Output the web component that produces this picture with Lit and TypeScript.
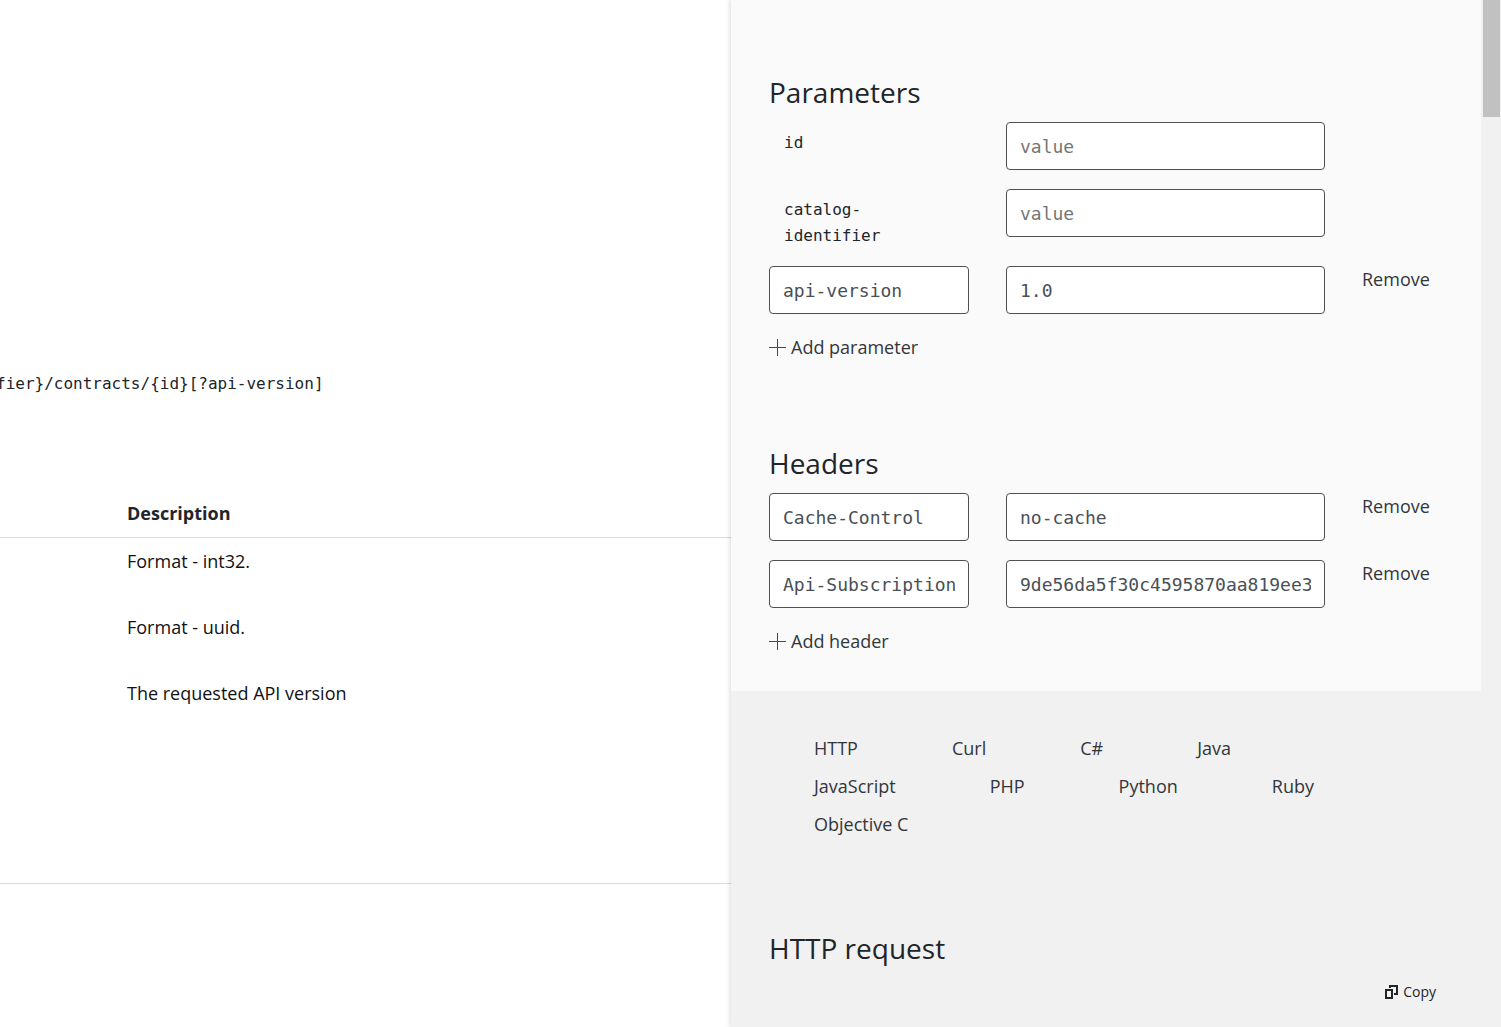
import { LitElement, html, css, nothing } from "lit";
import { customElement, property } from "lit/decorators.js";

interface Field {
  name: string;
  value: string;
  fixed?: boolean;
}

const PARAMETERS: Field[] = [
  { name: "id", value: "", fixed: true },
  { name: "catalog-identifier", value: "", fixed: true },
  { name: "api-version", value: "1.0" },
];

const HEADERS: Field[] = [
  { name: "Cache-Control", value: "no-cache" },
  { name: "Api-Subscription-Key", value: "9de56da5f30c4595870aa819ee3b" },
];

const DESCRIPTIONS = ["Format - int32.", "Format - uuid.", "The requested API version"];

const LANGUAGES = ["HTTP", "Curl", "C#", "Java", "JavaScript", "PHP", "Python", "Ruby", "Objective C"];

@customElement("field-group")
export class FieldGroup extends LitElement {
  @property() heading = "";
  @property() addLabel = "";
  @property({ attribute: false }) fields: Field[] = [];

  static styles = css`
    :host {
      display: block;
    }
    .heading {
      margin: 0 0 12px;
      font-size: 28px;
      font-weight: 400;
      line-height: 36px;
      color: #212529;
    }
    .rows {
      display: grid;
      gap: 17px;
      margin-bottom: 18px;
    }
    .row {
      display: grid;
      grid-template-columns: 200fr 319fr 81fr;
      column-gap: 37px;
      align-items: start;
      min-height: 50px;
    }
    .name {
      padding: 8px 15px 0;
      font-family: Consolas, "DejaVu Sans Mono", monospace;
      font-size: 16px;
      line-height: 26px;
      color: #212529;
    }
    .input {
      box-sizing: border-box;
      width: 100%;
      min-width: 0;
      height: 48px;
      padding: 0 13px;
      border: 1px solid #505050;
      border-radius: 4px;
      background: #fff;
      font-family: Consolas, "DejaVu Sans Mono", monospace;
      font-size: 18px;
      color: #495057;
    }
    .input::placeholder {
      color: #757575;
      opacity: 1;
    }
    .action {
      display: flex;
      align-items: center;
      gap: 5px;
      padding: 0;
      border: 0;
      background: none;
      font: inherit;
      line-height: 26px;
      color: #32363a;
      cursor: pointer;
    }
    .plus {
      width: 17px;
      height: 17px;
    }
  `;

  private renderField(field: Field, index: number) {
    const id = `value-${index}`;
    return html`<div class="row">
      ${field.fixed
        ? html`<label class="name" for=${id}>${field.name}</label>`
        : html`<input class="input" type="text" aria-label="name" .value=${field.name} />`}
      <input class="input" id=${id} type="text" aria-label=${field.name} placeholder="value" .value=${field.value} />
      ${field.fixed ? nothing : html`<button class="action" type="button">Remove</button>`}
    </div>`;
  }

  render() {
    return html`
      <h3 class="heading">${this.heading}</h3>
      <div class="rows">${this.fields.map((f, i) => this.renderField(f, i))}</div>
      <button class="action" type="button">
        <svg class="plus" viewBox="0 0 17 17" aria-hidden="true">
          <path d="M8.5 0V17M0 8.5H17" fill="none" stroke="#44484b" stroke-width="1" />
        </svg>
        ${this.addLabel}
      </button>
    `;
  }
}

@customElement("app-root")
export class AppRoot extends LitElement {
  static styles = css`
    :host {
      display: block;
      font-family: "Open Sans", sans-serif;
      font-size: 18px;
      font-weight: 400;
      color: #212529;
    }
    .page {
      display: grid;
      grid-template-columns: minmax(0, 731fr) minmax(0, 750fr) 20px;
      height: 100vh;
      overflow: hidden;
      background: #fff;
    }
    .docs {
      padding-top: 371px;
      overflow: hidden;
    }
    .url {
      display: block;
      margin: 0 0 103px -4px;
      font-family: Consolas, "DejaVu Sans Mono", monospace;
      font-size: 16px;
      line-height: 26px;
      white-space: nowrap;
    }
    .table {
      width: 100%;
      margin-bottom: 147px;
      border-collapse: collapse;
      line-height: 26px;
      text-align: left;
    }
    .head {
      padding: 0 0 11px 127px;
      border-bottom: 1px solid #dcdddf;
      font-weight: 700;
    }
    .cell {
      padding: 10px 0 30px 127px;
      color: #101214;
    }
    .rule {
      margin: 0;
      border: 0;
      border-top: 1px solid #dcdddf;
    }
    .console {
      position: relative;
      background: #f1f1f1;
      box-shadow: 0 0 6px rgba(0, 0, 0, 0.2);
    }
    .form {
      display: grid;
      gap: 85px;
      padding: 74px 38px 37px;
      background: #fafafa;
    }
    .sample {
      padding: 44px 38px 0;
    }
    .languages {
      display: flex;
      flex-wrap: wrap;
      gap: 12px 94px;
      margin: 0 0 93px;
      padding: 0 45px;
      list-style: none;
    }
    .language {
      display: block;
      line-height: 26px;
      color: #32363a;
      text-decoration: none;
    }
    .heading {
      margin: 0 0 12px;
      font-size: 28px;
      font-weight: 400;
      line-height: 36px;
    }
    .copy {
      display: flex;
      align-items: center;
      gap: 5px;
      margin: 0 7px 0 auto;
      padding: 0;
      border: 0;
      background: none;
      font: inherit;
      font-size: 14px;
      line-height: 28px;
      color: #212529;
      cursor: pointer;
    }
    .copy-icon {
      width: 13px;
      height: 14px;
    }
    .track {
      position: relative;
      padding: 0 1px 0 2px;
      background: #f1f1f1;
    }
    .thumb {
      height: 117px;
      background: #c1c1c1;
    }
  `;

  render() {
    return html`<div class="page">
      <main class="docs">
        <code class="url">fier}/contracts/{id}[?api-version]</code>
        <table class="table">
          <thead>
            <tr><th class="head" scope="col">Description</th></tr>
          </thead>
          <tbody>
            ${DESCRIPTIONS.map((d) => html`<tr><td class="cell">${d}</td></tr>`)}
          </tbody>
        </table>
        <hr class="rule" />
      </main>
      <aside class="console">
        <form class="form">
          <field-group heading="Parameters" .addLabel=${"Add parameter"} .fields=${PARAMETERS}></field-group>
          <field-group heading="Headers" .addLabel=${"Add header"} .fields=${HEADERS}></field-group>
        </form>
        <section class="sample">
          <ul class="languages">
            ${LANGUAGES.map((l) => html`<li><a class="language" href="#">${l}</a></li>`)}
          </ul>
          <h3 class="heading">HTTP request</h3>
          <button class="copy" type="button">
            <svg class="copy-icon" viewBox="0 0 13 14" aria-hidden="true">
              <path d="M1 5H7V13H1ZM5 3V1H12V9H9" fill="none" stroke="#212529" stroke-width="2" />
            </svg>
            Copy
          </button>
        </section>
      </aside>
      <div class="track"><div class="thumb"></div></div>
    </div>`;
  }
}
